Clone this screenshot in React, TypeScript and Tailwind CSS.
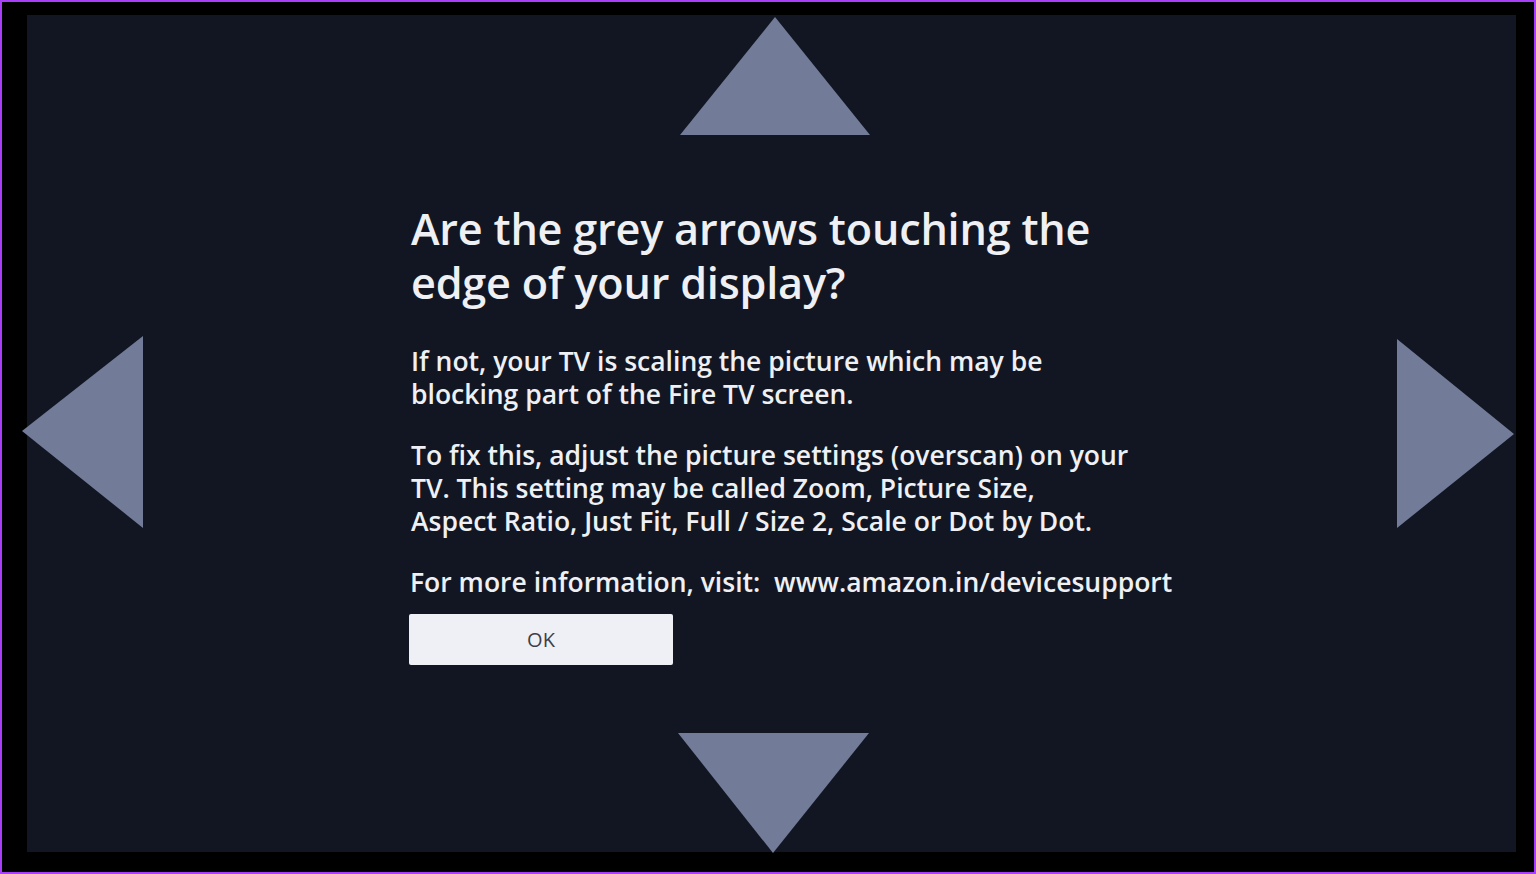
export default function App() {
  return (
    <div className="relative h-[874px] w-[1536px] overflow-hidden bg-[#a83ff9] p-[2px]">
      <div className="h-full w-full bg-black pb-[20px] pl-[25px] pr-[18px] pt-[13px]">
        <div
          className="h-full w-full bg-[#121622] pl-[384px] pt-[187px] text-[#eef0f4]"
          style={{ fontFamily: '"Open Sans", "Noto Sans", sans-serif' }}
        >
          <h1 className="text-[43.2px] font-semibold leading-[54px] tracking-[-0.2px]">
            <span className="block">Are the grey arrows touching the</span>
            <span className="block">edge of your display?</span>
          </h1>

          <div className="mt-[35px] space-y-[28px] text-[26.5px] font-semibold leading-[33px]">
            <p>
              If not, your TV is scaling the picture which may be
              <br />
              blocking part of the Fire TV screen.
            </p>
            <p>
              To fix this, adjust the picture settings (overscan) on your
              <br />
              TV. This setting may be called Zoom, Picture Size,
              <br />
              Aspect Ratio, Just Fit, Full / Size 2, Scale or Dot by Dot.
            </p>
            <p className="ml-[-1px] whitespace-pre">For more information, visit:  www.amazon.in/devicesupport</p>
          </div>

          <button className="ml-[-2px] mt-[15px] flex h-[51px] w-[264px] items-center justify-center rounded-[2px] bg-[#eef0f5] text-[20px] text-[#3b404b]">
            OK
          </button>
        </div>
      </div>

      {/* the four grey overscan arrows */}
      <svg className="pointer-events-none absolute inset-0" width="1536" height="874" viewBox="0 0 1536 874">
        <g fill="#727c99">
          <polygon points="775,17 870,135 680,135" />
          <polygon points="22,431 143,336 143,528" />
          <polygon points="1514,434 1397,339 1397,528" />
          <polygon points="678,733 869,733 773,853" />
        </g>
      </svg>
    </div>
  )
}
